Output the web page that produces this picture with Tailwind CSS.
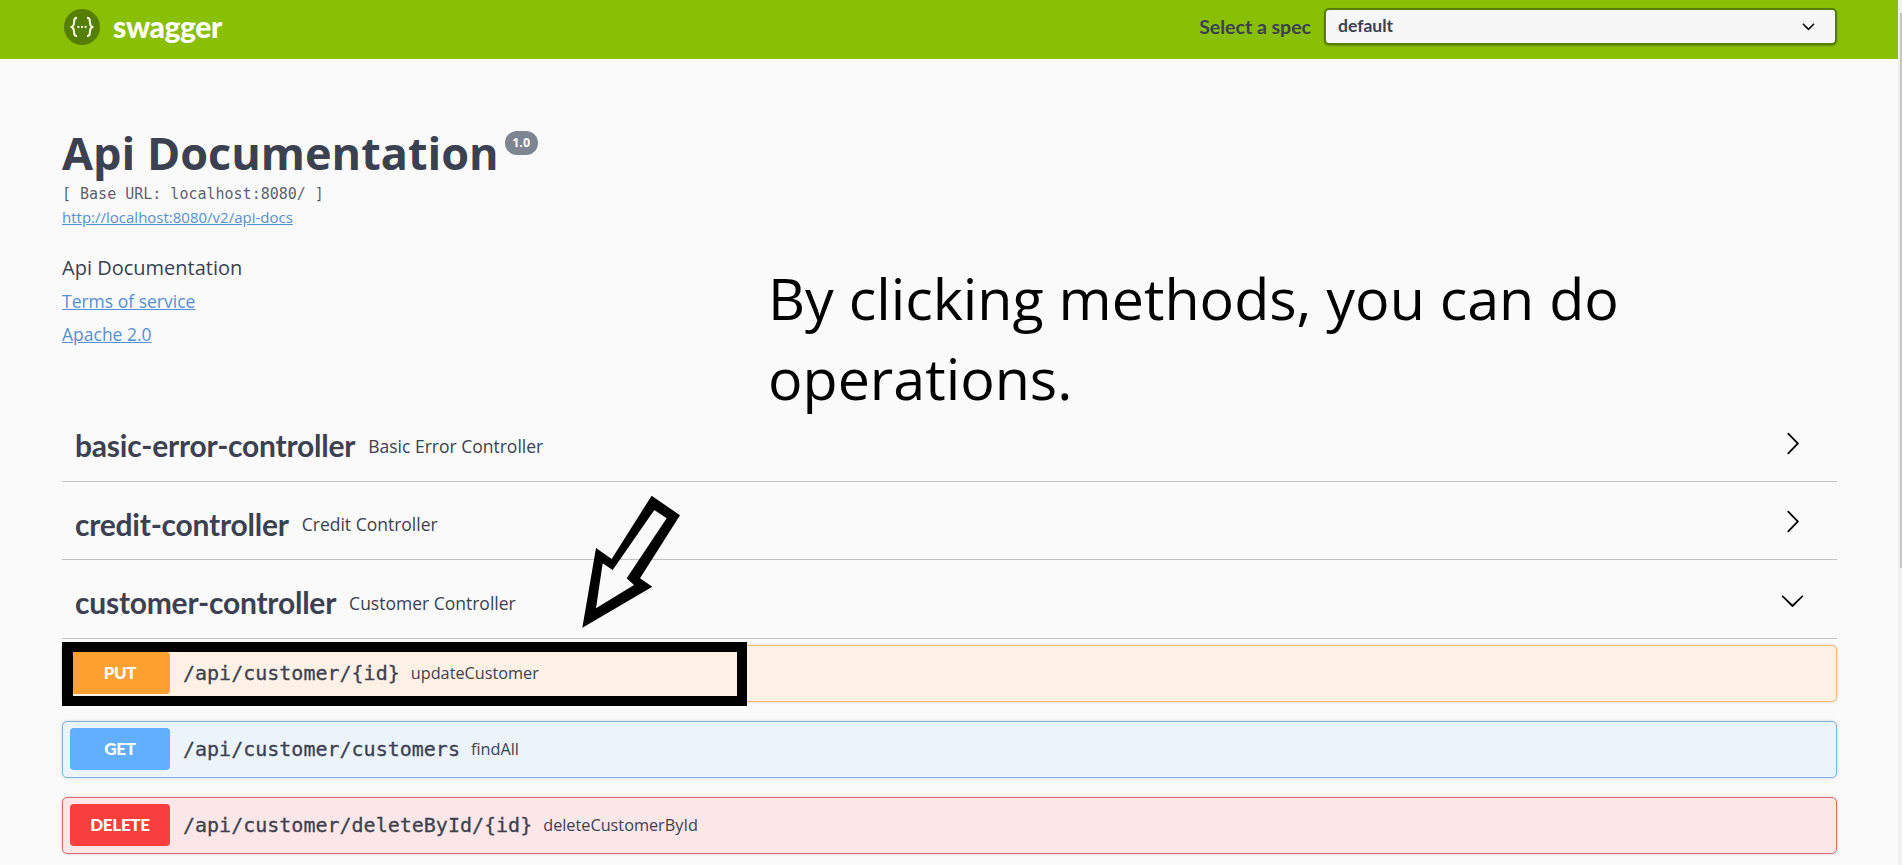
<!DOCTYPE html>
<html lang="en">
<head>
<meta charset="utf-8">
<title>Swagger UI</title>
<script src="https://cdn.jsdelivr.net/npm/@tailwindcss/browser@4"></script>
</head>
<body class="m-0 flex h-[865px] overflow-hidden bg-[#fafafa] font-['Open_Sans',sans-serif] text-[#3b4151]">
<main class="relative min-w-0 flex-1">
  <header class="flex h-[59px] items-center bg-[#89bf04] pb-[6px] pl-[64px] pr-[61px]">
    <svg class="h-9 w-9 shrink-0" viewBox="0 0 36 36" fill="none">
      <circle cx="18" cy="18" r="18" fill="#547f00"/>
      <path d="M13 8.8c-2.7 0-2.9 1.6-2.9 3.6 0 2.6-.6 4.7-2.3 5.6 1.7.9 2.3 3 2.3 5.6 0 2 .2 3.6 2.9 3.6M23 8.8c2.7 0 2.9 1.6 2.9 3.6 0 2.6.6 4.7 2.3 5.6-1.7.9-2.3 3-2.3 5.6 0 2-.2 3.6-2.9 3.6" stroke="#f4f8e6" stroke-width="2"/>
      <circle cx="14.4" cy="18" r="1.15" fill="#f4f8e6"/><circle cx="18" cy="18" r="1.15" fill="#f4f8e6"/><circle cx="21.6" cy="18" r="1.15" fill="#f4f8e6"/>
    </svg>
    <span class="mb-[2px] ml-[13px] font-['Lato',sans-serif] text-[30px] font-black leading-none tracking-[-0.4px] text-white">swagger</span>
    <label class="ml-auto mr-[13px] font-['Lato',sans-serif] text-[19.5px] font-bold text-[#3b4151]">Select a spec</label>
    <div class="flex h-[37px] w-[513px] items-center justify-between rounded-[5px] border-2 border-[#547f00] bg-[#f7f7f7] pl-[12px] pr-[20px] shadow-[0_1px_2px_rgba(0,0,0,0.25)]">
      <span class="font-['Lato',sans-serif] text-[17.5px] font-bold">default</span>
      <svg class="h-[13px] w-[13px]" viewBox="0 0 20 20"><path fill="#000" stroke="#000" stroke-width="1.2" d="M17.418 6.109c.272-.268.709-.268.979 0s.271.701 0 .969l-7.908 7.83c-.27.268-.707.268-.979 0l-7.908-7.83c-.27-.268-.27-.701 0-.969.271-.268.709-.268.979 0L10 13.25l7.418-7.141z"/></svg>
    </div>
  </header>

  <section class="pl-[62px] pr-[61px]">
    <div class="flex items-start pt-[64px]">
      <h1 class="text-[45px] font-bold leading-[60px]">Api Documentation</h1>
      <span class="ml-[6px] mt-[8px] flex h-[24px] w-[33px] items-center justify-center rounded-full bg-[#7d8492] text-[12.5px] font-bold text-white">1.0</span>
    </div>
    <p class="mt-[2px] font-['DejaVu_Sans_Mono',monospace] text-[15px] leading-[18px] text-[#3b4151]/85">[ Base URL: localhost:8080/ ]</p>
    <a class="mt-[4px] block text-[15px] leading-[20px] text-[#5590d0] underline">http://localhost:8080/v2/api-docs</a>
    <p class="mt-[27px] text-[20px] leading-[28px]">Api Documentation</p>
    <a class="mt-[6px] block text-[17.5px] leading-[26px] text-[#5590d0] underline">Terms of service</a>
    <a class="mt-[7px] block text-[17.5px] leading-[26px] text-[#5590d0] underline">Apache 2.0</a>

    <div class="mt-[56px]">
      <div class="flex h-[78.5px] items-center border-b-[1.25px] border-[#3b4151]/30 pl-[13px] pr-[32px]">
        <h4 class="pt-[8px] font-['Lato',sans-serif] text-[30px] font-bold tracking-[-0.23px]">basic-error-controller</h4>
        <small class="ml-[13px] pt-[8px] text-[17.5px]">Basic Error Controller</small>
        <svg class="ml-auto mt-[3px] h-[25px] w-[25px]" viewBox="0 0 20 20"><path d="M13.25 10L6.109 2.58a.697.697 0 0 1 0-.979.68.68 0 0 1 .969 0l7.83 7.908a.697.697 0 0 1 0 .979l-7.83 7.908a.68.68 0 0 1-.969 0 .697.697 0 0 1 0-.979L13.25 10z"/></svg>
      </div>
      <div class="flex h-[78.5px] items-center border-b-[1.25px] border-[#3b4151]/30 pl-[13px] pr-[32px]">
        <h4 class="pt-[8px] font-['Lato',sans-serif] text-[30px] font-bold tracking-[-0.23px]">credit-controller</h4>
        <small class="ml-[13px] pt-[8px] text-[17.5px]">Credit Controller</small>
        <svg class="ml-auto mt-[3px] h-[25px] w-[25px]" viewBox="0 0 20 20"><path d="M13.25 10L6.109 2.58a.697.697 0 0 1 0-.979.68.68 0 0 1 .969 0l7.83 7.908a.697.697 0 0 1 0 .979l-7.83 7.908a.68.68 0 0 1-.969 0 .697.697 0 0 1 0-.979L13.25 10z"/></svg>
      </div>
      <div class="flex h-[78.5px] items-center border-b-[1.25px] border-[#3b4151]/30 pl-[13px] pr-[32px]">
        <h4 class="pt-[8px] font-['Lato',sans-serif] text-[30px] font-bold tracking-[-0.23px]">customer-controller</h4>
        <small class="ml-[13px] pt-[8px] text-[17.5px]">Customer Controller</small>
        <svg class="ml-auto mt-[3px] h-[25px] w-[25px]" viewBox="0 0 20 20"><path d="M17.418 6.109c.272-.268.709-.268.979 0s.271.701 0 .969l-7.908 7.83c-.27.268-.707.268-.979 0l-7.908-7.83c-.27-.268-.27-.701 0-.969.271-.268.709-.268.979 0L10 13.25l7.418-7.141z"/></svg>
      </div>
    </div>

    <div class="mt-[6px] flex flex-col gap-[19px]">
      <div class="flex h-[57px] items-center rounded-[5px] border-[1.25px] border-[#f5b968] bg-[#fdf1e6] pl-[7px] shadow-[0_0_3px_rgba(0,0,0,0.19)]">
        <span class="flex h-[42px] w-[100px] items-center justify-center rounded-[4px] bg-[#fca130] font-['Lato',sans-serif] text-[17px] font-black tracking-[-0.3px] text-white">PUT</span>
        <span class="ml-[13px] font-['DejaVu_Sans_Mono',monospace] text-[20px] text-[#3b4151] [-webkit-text-stroke:0.3px_#3b4151]">/api/customer/{id}</span>
        <span class="ml-[11px] text-[16.25px]">updateCustomer</span>
      </div>
      <div class="flex h-[57px] items-center rounded-[5px] border-[1.25px] border-[#7db7dc] bg-[#ebf3fb] pl-[7px] shadow-[0_0_3px_rgba(0,0,0,0.19)]">
        <span class="flex h-[42px] w-[100px] items-center justify-center rounded-[4px] bg-[#61affe] font-['Lato',sans-serif] text-[17px] font-black tracking-[-0.3px] text-white">GET</span>
        <span class="ml-[13px] font-['DejaVu_Sans_Mono',monospace] text-[20px] text-[#3b4151] [-webkit-text-stroke:0.3px_#3b4151]">/api/customer/customers</span>
        <span class="ml-[11px] text-[16.25px]">findAll</span>
      </div>
      <div class="flex h-[57px] items-center rounded-[5px] border-[1.25px] border-[#df6a6e] bg-[#fbe7e7] pl-[7px] shadow-[0_0_3px_rgba(0,0,0,0.19)]">
        <span class="flex h-[42px] w-[100px] items-center justify-center rounded-[4px] bg-[#f93e3e] font-['Lato',sans-serif] text-[17px] font-black tracking-[-0.3px] text-white">DELETE</span>
        <span class="ml-[13px] font-['DejaVu_Sans_Mono',monospace] text-[20px] text-[#3b4151] [-webkit-text-stroke:0.3px_#3b4151]">/api/customer/deleteById/{id}</span>
        <span class="ml-[11px] text-[16.25px]">deleteCustomerById</span>
      </div>
    </div>
  </section>

  <p class="absolute left-[768px] top-[258px] w-[900px] text-[57.4px] leading-[80px] text-black">By clicking methods, you can do operations.</p>
  <div class="absolute left-[62px] top-[642px] h-[64px] w-[685px] border-y-10 border-l-[11px] border-r-10 border-black"></div>
  <svg class="absolute left-[560px] top-[480px] h-[160px] w-[160px]" viewBox="0 0 480 480">
    <path fill="#000" fill-rule="evenodd" d="M67 443L108 204L155 237L275 47L360 106L240 295L277 320ZM283 90L158 270L128 250L108 385L222 315L200 295L320 115Z"/>
  </svg>
</main>
<aside class="flex h-full w-[4px] shrink-0 justify-end bg-[#f1f1f1]">
  <div class="mt-[13px] h-[555px] w-[2.5px] bg-[#c4c4c4]"></div>
</aside>
</body>
</html>
